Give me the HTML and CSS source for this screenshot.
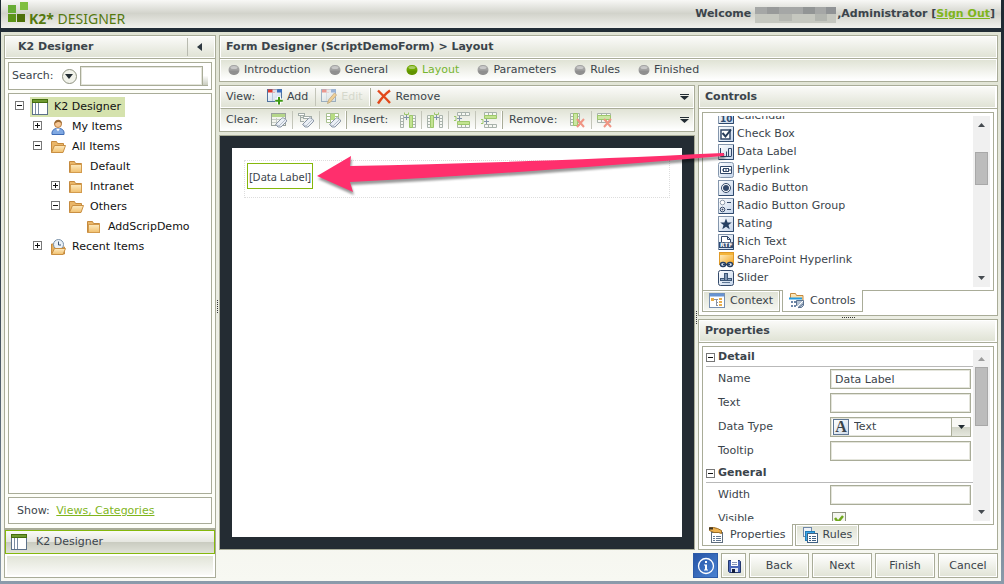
FILE: index.html
```html
<!DOCTYPE html>
<html lang="en">
<head>
    <meta charset="UTF-8">
    <meta name="viewport" content="width=device-width, initial-scale=1.0">
    <title>K2 Designer</title>
    <link rel="stylesheet" href="styles.css">
</head>
<body>
    <!-- shared icons -->
    <svg class="sprite" width="0" height="0">
        <defs>
            <linearGradient id="gFolder" x1="0" y1="0" x2="0" y2="1"><stop offset="0" stop-color="#fdeac0"/><stop offset="1" stop-color="#f0bf6c"/></linearGradient>
            <linearGradient id="gBlue" x1="0" y1="0" x2="1" y2="1"><stop offset="0" stop-color="#ffffff"/><stop offset="1" stop-color="#c3d4ea"/></linearGradient>
            <linearGradient id="gOrange" x1="0" y1="0" x2="1" y2="1"><stop offset="0" stop-color="#fff3cf"/><stop offset="1" stop-color="#f3a51c"/></linearGradient>
            <symbol id="designer" viewBox="0 0 16 16">
                <rect x=".5" y="3.5" width="15" height="12" fill="#fff" stroke="#5c7189"/>
                <path d="M3.5 4v11M6.5 4v11" stroke="#7b8da3" fill="none"/>
                <rect x=".5" y=".5" width="15" height="3" fill="#6e9a30" stroke="#456e0e"/>
            </symbol>
            <symbol id="folder" viewBox="0 0 16 16">
                <path d="M1.500 13.500v-11h5l1 2h6v9z" fill="#eab668" stroke="#c58a3e"/>
                <rect x="2.500" y="5.500" width="11" height="8" fill="url(#gFolder)" stroke="#d39b4d"/>
            </symbol>
            <symbol id="folder-open" viewBox="0 0 16 16">
                <path d="M1.500 13.500v-11h5l1 2h6v3" fill="#eab668" stroke="#c58a3e"/>
                <path d="M1.500 13.500l3-7h11l-2.500 7z" fill="url(#gFolder)" stroke="#c98f42"/>
            </symbol>
            <symbol id="user" viewBox="0 0 16 16">
                <path d="M2 15.500c-.5-4 2-5.500 4-6h4c2.500.5 4.500 2 4 6z" fill="#7fa8e2" stroke="#3f6cb5"/>
                <path d="M6 9.500l2 3 2-3z" fill="#fff"/>
                <circle cx="8" cy="5" r="3.500" fill="#f6c795" stroke="#b97d42"/>
                <path d="M4.500 5c-.5-5 7.500-6 7.500 0-1-2-4-3-7.500 0z" fill="#9a6a35"/>
            </symbol>
            <symbol id="recent" viewBox="0 0 16 16">
                <path d="M1.500 15v-10h4v3h9v7z" fill="#e5ae5c" stroke="#c58a3e"/>
                <circle cx="8.500" cy="5.500" r="5" fill="#eaf1f8" stroke="#7890a8"/>
                <path d="M8.500 2.500v3.500h2.500" stroke="#435a75" fill="none"/>
                <path d="M1.500 15.500l3-6h11l-2.500 6z" fill="url(#gFolder)" stroke="#c98f42"/>
            </symbol>
            <symbol id="view" viewBox="0 0 16 16">
                <rect x=".5" y=".5" width="14" height="12" fill="url(#gBlue)" stroke="#51749f"/>
                <path d="M1 2h7" stroke="#e23c32" stroke-width="3"/><path d="M5.500 2h5" stroke="#d9dce5" stroke-width="3"/><path d="M10 2h5" stroke="#3c6fbd" stroke-width="3"/>
                <path d="M5.500 4v8" stroke="#b9cade"/>
            </symbol>
            <symbol id="view-add" viewBox="0 0 16 16">
                <use href="#view"/><path d="M12 7.500v8M8 11.500h8" stroke="#fff" stroke-width="4"/><path d="M12 8v7.500M8.200 11.800h7.600" stroke="#3f9a16" stroke-width="2"/>
            </symbol>
            <symbol id="view-edit" viewBox="0 0 16 16">
                <use href="#view"/><path d="M6.500 14.500l1-3.500 6-7 2 2-6 7z" fill="#f4b347" stroke="#a9772e"/>
            </symbol>
            <symbol id="remove" viewBox="0 0 16 16">
                <path d="M2 1.500c3 3 8 8 12 12.500M14 1.500C9 5 5 10 2 14.500" stroke="#e2491b" stroke-width="2.400" fill="none"/>
            </symbol>
            <symbol id="eraser" viewBox="0 0 16 16">
                <path d="M4.500 12.500l6-6q1-1 2-.5l3 2q.500 1-.5 2l-5 5h-3z" fill="#eaeff5" stroke="#8793a3"/><path d="M5 12.500l3 1.500 6.500-6.500" stroke="#b3bdca" fill="none"/>
            </symbol>
            <symbol id="clear-view" viewBox="0 0 16 16">
                <rect x=".5" y="1.500" width="14" height="12" fill="#f3f5ef" stroke="#9aa29b"/><path d="M1 3.500h13" stroke="#b5d68a" stroke-width="3"/><path d="M1 7.500h13M1 10.500h13M5.500 6v8" stroke="#c6ccc5"/><use href="#eraser"/>
            </symbol>
            <symbol id="clear-control" viewBox="0 0 16 16">
                <rect x=".5" y="1.500" width="6" height="2" fill="#fff" stroke="#a2aca8"/><rect x="5.500" y="4.500" width="8" height="2" fill="#fff" stroke="#a2aca8"/><path d="M2.500 4v6M2 5.500h3M2 9.500h4" stroke="#a2aca8" fill="none"/><use href="#eraser"/>
            </symbol>
            <symbol id="clear-cell" viewBox="0 0 16 16">
                <path d="M1.500 1.500h12v9h-12zM5.500 1.500v9M9.500 1.500v9M1.500 4.500h12M1.500 7.500h12" fill="#fff" stroke="#a9c191"/><path d="M6 2h4v6h-4z" fill="#b7dd83"/><use href="#eraser"/>
            </symbol>
            <symbol id="col-left" viewBox="0 0 16 16">
                <path d="M.5 3.500h3v12h-3zM.5 6.500h3M.5 9.500h3M.5 12.500h3M12.500 3.500h3v12h-3zM12.500 6.500h3M12.500 9.500h3M12.500 12.500h3" fill="#f6f8f3" stroke="#a9b3ac"/>
                <path d="M9.500 3.500h3v12h-3z" fill="#c3e391" stroke="#9cc76a"/><path d="M4.500.5v2h4v-2" stroke="#9cc76a" fill="none"/><path d="M6.500 3v5M4 5.500h5" stroke="#8093a8"/>
            </symbol>
            <symbol id="row-up" viewBox="0 0 16 16">
                <path d="M3.500.5h12v3h-12zM7.500.5v3M11.500.5v3M3.500 12.500h12v3h-12zM7.500 12.500v3M11.500 12.500v3" fill="#f6f8f3" stroke="#a9b3ac"/>
                <path d="M3.500 9.500h12v3h-12z" fill="#c3e391" stroke="#9cc76a"/><path d="M0 4.500h2v4H0" stroke="#9cc76a" fill="none"/><path d="M5.500 4v5M3 6.500h5" stroke="#8093a8"/>
            </symbol>
            <symbol id="col-remove" viewBox="0 0 16 16">
                <path d="M.5 1.500h9v12h-9zM.5 4.500h9M.5 7.500h9M.5 10.500h9M3.500 1.500v12" fill="#f6f8f3" stroke="#a9b3ac"/><path d="M3.500 1.500h4v12h-4z" fill="#cbe6a2" stroke="#9cc76a"/><path d="M7 7l7 8M14 7l-7 8" stroke="#f09584" stroke-width="2"/>
            </symbol>
            <symbol id="row-remove" viewBox="0 0 16 16">
                <path d="M.5 1.500h13v9h-13zM4.500 1.500v9M9.500 1.500v9" fill="#f6f8f3" stroke="#a9b3ac"/><path d="M.5 3.500h13v4h-13z" fill="#cbe6a2" stroke="#9cc76a"/><path d="M7 7l7 8M14 7l-7 8" stroke="#f09584" stroke-width="2"/>
            </symbol>
            <symbol id="tile" viewBox="0 0 16 16">
                <rect x=".5" y=".5" width="15" height="15" fill="url(#gBlue)" stroke="#8496ad"/><path d="M15.500 1v14.500H1" stroke="#2f4a6e" fill="none"/>
            </symbol>
            <symbol id="c-calendar" viewBox="0 0 16 16"><use href="#tile"/><path d="M1 3h14" stroke="#2f4a6e" stroke-width="3"/><text x="2" y="14" class="tile-text">10</text></symbol>
            <symbol id="c-check" viewBox="0 0 16 16"><use href="#tile"/><rect x="3" y="4" width="9" height="9" fill="#fff" stroke="#33496a" stroke-width="1.500"/><path d="M4.500 7l3 3.500 5.500-7" stroke="#263c59" stroke-width="2" fill="none"/></symbol>
            <symbol id="c-label" viewBox="0 0 16 16"><use href="#tile"/><path d="M2.500 4v8.500h11M5.500 12v-3M8.500 12V7.500M10.500 12V4.500h3V12" stroke="#33496a" fill="none"/></symbol>
            <symbol id="c-link" viewBox="0 0 16 16"><rect x=".5" y=".5" width="15" height="15" rx="2" fill="url(#gBlue)" stroke="#8496ad"/><path d="M2.500 4.500h11v7h-11z" fill="#fff" stroke="#33496a"/><rect x="5.500" y="6.500" width="5" height="3" fill="#fff" stroke="#33496a"/><path d="M4 8h2M7 8h2M10 8h3" stroke="#33496a"/></symbol>
            <symbol id="c-radio" viewBox="0 0 16 16"><use href="#tile"/><circle cx="8" cy="8" r="4.500" fill="#fff" stroke="#33496a"/><circle cx="8" cy="8" r="3" fill="#33496a"/></symbol>
            <symbol id="c-group" viewBox="0 0 16 16"><use href="#tile"/><circle cx="4.500" cy="4.500" r="2.300" fill="#fff" stroke="#8d9aaa"/><circle cx="4.500" cy="11.500" r="2.300" fill="#fff" stroke="#33496a"/><circle cx="4.500" cy="11.500" r="1" fill="#33496a"/><path d="M9 4.500h4M9 11.500h4" stroke="#33496a"/></symbol>
            <symbol id="c-rating" viewBox="0 0 16 16"><use href="#tile"/><path d="M8 2.500l1.600 4h4.200l-3.300 2.600 1.200 4.200L8 10.800l-3.700 2.500 1.200-4.200-3.300-2.600h4.200z" fill="#263f61"/></symbol>
            <symbol id="c-rich" viewBox="0 0 16 16"><use href="#tile"/><path d="M3.500 8V2.500h6l3 3V8M9.500 2.500v3h3" fill="#fff" stroke="#33496a"/><rect x="1" y="8" width="14" height="6" fill="#2f4a6e"/><text x="2" y="13" class="rtf-text">RTF</text></symbol>
            <symbol id="c-share" viewBox="0 0 16 16"><rect x="1.500" y=".5" width="14" height="12" fill="url(#gOrange)" stroke="#e09a28"/><path d="M2 2h13" stroke="#f4b53a" stroke-width="2"/><rect x="2.500" y="10.500" width="5" height="4" rx="2" fill="#dbe4f0" stroke="#263f61" stroke-width="1.500"/><rect x="9.500" y="10.500" width="5" height="4" rx="2" fill="#dbe4f0" stroke="#263f61" stroke-width="1.500"/><path d="M5 12.500h7" stroke="#263f61" stroke-width="1.500"/></symbol>
            <symbol id="c-slider" viewBox="0 0 16 16"><rect x=".5" y=".5" width="15" height="15" rx="2" fill="url(#gBlue)" stroke="#33496a"/><rect x="2" y="8" width="12" height="3" fill="#3c5676"/><rect x="3" y="9" width="10" height="1" fill="#8ea2bd"/><rect x="6" y="3" width="4" height="8" fill="#3c5676"/><rect x="7" y="4" width="2" height="6" fill="#7e94b2"/><path d="M4 12.500h8" stroke="#5d7593"/></symbol>
            <symbol id="t-context" viewBox="0 0 16 16"><rect x=".5" y=".5" width="15" height="14" fill="#fff" stroke="#7890b0"/><path d="M1 2h14" stroke="#6693d2" stroke-width="3"/><path d="M5 6.500h4M7.500 6v6M7 9.500h2M7 12.500h2" stroke="#8a91a0" fill="none"/><path d="M2 5h3v3h-3zM10 5h3v2h-3zM10 8h3v2h-3zM10 11h3v2h-3z" fill="#e8ad4b"/></symbol>
            <symbol id="t-controls" viewBox="0 0 16 16"><path d="M1.500 14V.5h5l1 2h6.500v5" fill="url(#gFolder)" stroke="#c58a3e"/><rect x="1" y="6" width="12" height="9" fill="#fff"/><path d="M0 5.500h13" stroke="#249be0" stroke-width="2"/><path d="M2 8h2v2h-2zM2 12h2v2h-2zM5 8h2v2h-2zM5 12h2v2h-2z" fill="#6e87a8"/><path d="M7.500 7.500h7v5l-2 2h-3l-2-2z" fill="#b4c2d3" stroke="#5c728f"/><path d="M8 14l6-6" stroke="#fff"/><path d="M9 15l5-4" stroke="#5c728f"/></symbol>
            <symbol id="t-properties" viewBox="0 0 16 16"><rect x="2.500" y="5.500" width="11" height="10" fill="#fff" stroke="#5f6e7d"/><path d="M7 9.500h5M7 11.500h5M7 13.500h5M4 9.500h2M4 11.500h2M4 13.500h2" stroke="#627791"/><path d="M.5.5h4l4 1 4 2v3l-3-1H5l-4.500-2z" fill="#edb04e" stroke="#9a6b22"/><path d="M0 1.500h4" stroke="#3c3527" stroke-width="2"/></symbol>
            <symbol id="t-rules" viewBox="0 0 16 16"><rect x="1.500" y=".5" width="8" height="9" fill="#eef3f9" stroke="#6e87a8"/><rect x="3.500" y="4.500" width="9" height="9" fill="#3aa6e6" stroke="#207cb8"/><rect x="5.500" y="6.500" width="10" height="9" fill="#fff" stroke="#3f6183"/><path d="M7 9.500h2M10 9.500h4M7 11.500h2M10 11.500h4M7 13.500h2M10 13.500h4" stroke="#3f6183"/></symbol>
            <symbol id="ball" viewBox="0 0 12 12"><rect x=".5" y="1" width="11" height="10" rx="5" fill="currentColor"/><path d="M1 6.500h10a5 4.500 0 0 1-10 0z" fill="#000" opacity=".12"/><ellipse cx="6" cy="3.500" rx="3.500" ry="1.500" fill="#fff" opacity=".4"/></symbol>
        </defs>
    </svg>

    <div class="app">
        <header class="banner">
            <div class="logo">
                <svg width="20" height="20" viewBox="0 0 20 20">
                    <rect y="3" width="8" height="8" fill="#68ac35"/><rect x="12" width="8" height="8" fill="#7fbf3f"/>
                    <rect y="12" width="8" height="8" fill="#5c9418"/><rect x="9" y="12" width="8" height="8" fill="#4d7009"/>
                </svg>
                <span><b>K2*</b> DESIGNER</span>
            </div>
            <div class="welcome">
                <span>Welcome</span>
                <svg class="masked" width="81" height="16" viewBox="0 0 81 16">
                    <rect width="81" height="16" fill="#c5c7bf"/><rect width="81" height="7" fill="#a5a7a6"/><rect x="12" width="12" height="7" fill="#989a9a"/><rect x="48" width="12" height="7" fill="#929595"/><rect x="71" width="10" height="7" fill="#909395"/>
                    <rect x="24" y="7" width="13" height="7" fill="#b5b7b1"/><rect x="60" y="7" width="12" height="7" fill="#b2b5af"/>
                </svg>
                <span>,Administrator [<a href="#">Sign Out</a>]</span>
            </div>
        </header>

        <div class="frame">
            <aside class="panel sidebar">
                <div class="panel-header side-header">
                    <h2>K2 Designer</h2>
                    <button class="collapse" aria-label="Collapse"><svg width="5" height="8"><path d="M5 0v8L0 4z" fill="#2d3840"/></svg></button>
                </div>
                <div class="side-body">
                    <form class="box search">
                        <label for="search">Search:</label>
                        <button type="button" class="round" aria-label="Search options"><svg width="8" height="5"><path d="M0 0h8L4 5z" fill="#222c33"/></svg></button>
                        <input type="text" id="search">
                        <span class="search-go"></span>
                    </form>
                    <div class="box tree">
                        <ul>
                            <li>
                                <div class="node"><button class="toggle minus" aria-label="Collapse"></button><span class="item selected"><svg><use href="#designer"/></svg>K2 Designer</span></div>
                                <ul>
                                    <li><div class="node"><button class="toggle plus" aria-label="Expand"></button><span class="item"><svg><use href="#user"/></svg>My Items</span></div></li>
                                    <li>
                                        <div class="node"><button class="toggle minus" aria-label="Collapse"></button><span class="item"><svg><use href="#folder-open"/></svg>All Items</span></div>
                                        <ul>
                                            <li><div class="node"><span class="toggle-gap"></span><span class="item"><svg><use href="#folder"/></svg>Default</span></div></li>
                                            <li><div class="node"><button class="toggle plus" aria-label="Expand"></button><span class="item"><svg><use href="#folder"/></svg>Intranet</span></div></li>
                                            <li>
                                                <div class="node"><button class="toggle minus" aria-label="Collapse"></button><span class="item"><svg><use href="#folder-open"/></svg>Others</span></div>
                                                <ul>
                                                    <li><div class="node"><span class="toggle-gap"></span><span class="item"><svg><use href="#folder"/></svg>AddScripDemo</span></div></li>
                                                </ul>
                                            </li>
                                        </ul>
                                    </li>
                                    <li><div class="node"><button class="toggle plus" aria-label="Expand"></button><span class="item"><svg><use href="#recent"/></svg>Recent Items</span></div></li>
                                </ul>
                            </li>
                        </ul>
                    </div>
                    <div class="box show">Show: <a href="#">Views, Categories</a></div>
                </div>
                <button class="side-tab"><svg><use href="#designer"/></svg>K2 Designer</button>
                <div class="side-footer"></div>
            </aside>

            <div class="splitter vertical"></div>

            <main class="main">
                <section class="panel wizard">
                    <div class="panel-header"><h1>Form Designer (ScriptDemoForm) &gt; Layout</h1></div>
                    <ol class="steps">
                        <li><svg><use href="#ball"/></svg>Introduction</li>
                        <li><svg><use href="#ball"/></svg>General</li>
                        <li class="current"><svg><use href="#ball"/></svg>Layout</li>
                        <li><svg><use href="#ball"/></svg>Parameters</li>
                        <li><svg><use href="#ball"/></svg>Rules</li>
                        <li><svg><use href="#ball"/></svg>Finished</li>
                    </ol>
                </section>

                <div class="workspace">
                    <section class="center">
                        <div class="panel toolbars">
                            <div class="toolbar upper">
                                <span class="tool-label">View:</span>
                                <button><svg><use href="#view-add"/></svg>Add</button>
                                <button disabled><svg><use href="#view-edit"/></svg>Edit</button>
                                <button class="group-start"><svg><use href="#remove"/></svg>Remove</button>
                                <button class="more" aria-label="More"><svg viewBox="0 0 9 6"><path d="M0 0h9v1H0zM0 2h9L4.500 6z" fill="#222c33"/></svg></button>
                            </div>
                            <div class="toolbar lower">
                                <span class="tool-label">Clear:</span>
                                <button aria-label="Clear view"><svg><use href="#clear-view"/></svg></button>
                                <button aria-label="Clear control"><svg><use href="#clear-control"/></svg></button>
                                <button aria-label="Clear cell"><svg><use href="#clear-cell"/></svg></button>
                                <span class="tool-label group-start">Insert:</span>
                                <button aria-label="Insert column left"><svg><use href="#col-left"/></svg></button>
                                <button aria-label="Insert column right"><svg class="flip-x"><use href="#col-left"/></svg></button>
                                <button aria-label="Insert row above"><svg><use href="#row-up"/></svg></button>
                                <button aria-label="Insert row below"><svg class="flip-y"><use href="#row-up"/></svg></button>
                                <span class="tool-label group-start">Remove:</span>
                                <button aria-label="Remove column"><svg><use href="#col-remove"/></svg></button>
                                <button aria-label="Remove row"><svg><use href="#row-remove"/></svg></button>
                                <button class="more" aria-label="More"><svg viewBox="0 0 9 6"><path d="M0 0h9v1H0zM0 2h9L4.500 6z" fill="#222c33"/></svg></button>
                            </div>
                        </div>
                        <div class="canvas">
                            <div class="sheet">
                                <div class="cell"><span class="data-label">[Data Label]</span></div>
                            </div>
                        </div>
                    </section>

                    <div class="splitter vertical"></div>

                    <section class="right">
                        <div class="panel tool-panel">
                            <div class="panel-header notch"><h2>Controls</h2></div>
                            <div class="tool-body">
                                <div class="box list-box">
                                    <ul class="controls">
                                        <li><svg><use href="#c-calendar"/></svg>Calendar</li>
                                        <li><svg><use href="#c-check"/></svg>Check Box</li>
                                        <li><svg><use href="#c-label"/></svg>Data Label</li>
                                        <li><svg><use href="#c-link"/></svg>Hyperlink</li>
                                        <li><svg><use href="#c-radio"/></svg>Radio Button</li>
                                        <li><svg><use href="#c-group"/></svg>Radio Button Group</li>
                                        <li><svg><use href="#c-rating"/></svg>Rating</li>
                                        <li><svg><use href="#c-rich"/></svg>Rich Text</li>
                                        <li><svg><use href="#c-share"/></svg>SharePoint Hyperlink</li>
                                        <li><svg><use href="#c-slider"/></svg>Slider</li>
                                    </ul>
                                    <div class="scrollbar middle">
                                        <svg width="7" height="4"><path d="M0 4h7L3.500 0z" fill="#454b50"/></svg>
                                        <div class="track"><div class="thumb"></div></div>
                                        <svg width="7" height="4"><path d="M0 0h7L3.500 4z" fill="#454b50"/></svg>
                                    </div>
                                </div>
                                <div class="tabs">
                                    <button class="tab"><svg><use href="#t-context"/></svg>Context</button>
                                    <button class="tab active"><svg><use href="#t-controls"/></svg>Controls</button>
                                </div>
                            </div>
                        </div>

                        <div class="splitter horizontal"></div>

                        <div class="panel tool-panel">
                            <div class="panel-header notch"><h2>Properties</h2></div>
                            <div class="tool-body">
                                <div class="box list-box">
                                    <form class="properties">
                                        <h3><button type="button" class="toggle minus" aria-label="Collapse"></button>Detail</h3>
                                        <div class="field"><label for="name">Name</label><input type="text" id="name" value="Data Label"></div>
                                        <div class="field"><label for="text">Text</label><input type="text" id="text"></div>
                                        <div class="field">
                                            <label for="type">Data Type</label>
                                            <div class="select-wrap">
                                                <select id="type"><option>Text</option></select>
                                                <span class="type-icon">A</span>
                                                <span class="select-arrow"><svg width="7" height="4"><path d="M0 0h7L3.500 4z" fill="#222c33"/></svg></span>
                                            </div>
                                        </div>
                                        <div class="field"><label for="tooltip">Tooltip</label><input type="text" id="tooltip"></div>
                                        <h3><button type="button" class="toggle minus" aria-label="Collapse"></button>General</h3>
                                        <div class="field"><label for="width">Width</label><input type="text" id="width"></div>
                                        <div class="field">
                                            <label for="visible">Visible</label>
                                            <span class="check-wrap"><input type="checkbox" id="visible" checked><svg viewBox="0 0 10 10"><path d="M1 4l3 4 5-6" fill="none" stroke="#6fa81d" stroke-width="2.500"/></svg></span>
                                        </div>
                                    </form>
                                    <div class="scrollbar top">
                                        <svg width="7" height="4"><path d="M0 4h7L3.500 0z" fill="#9c9c9c"/></svg>
                                        <div class="track"><div class="thumb"></div></div>
                                        <svg width="7" height="4"><path d="M0 0h7L3.500 4z" fill="#454b50"/></svg>
                                    </div>
                                </div>
                                <div class="tabs">
                                    <button class="tab active"><svg><use href="#t-properties"/></svg>Properties</button>
                                    <button class="tab"><svg><use href="#t-rules"/></svg>Rules</button>
                                </div>
                            </div>
                        </div>
                    </section>

                    <!-- drag arrow from the control list to the sheet -->
                    <svg class="arrow" width="420" height="50" viewBox="0 0 420 50">
                        <path d="M4 26L38 6l-1 10Q200 13 410 3q3 2 0 3Q200 24 37 32l3 10z" fill="#ff2f6d"/>
                    </svg>
                </div>

                <footer class="actions">
                    <button class="square info" aria-label="Information"><svg viewBox="0 0 18 18"><circle cx="9" cy="9" r="7.500" fill="none" stroke="#fff" stroke-width="1.300"/><path d="M8 4h2v2H8zM7 7.500h3v5h1v1H7v-1h1v-4H7z" fill="#fff"/></svg></button>
                    <button class="square" aria-label="Save"><svg viewBox="0 0 18 18"><path d="M3.500 3.500h11l1 1v11h-11l-1-1z" fill="#4a67b8" stroke="#24386f"/><path d="M6 3h7v6H6z" fill="#fff"/><path d="M7 5.500h5M7 7.500h5" stroke="#8a97b8"/><path d="M6 11h7v4H6z" fill="#dfe5f2"/><path d="M7 12h3v4H7z" fill="#111c3d"/></svg></button>
                    <button>Back</button>
                    <button>Next</button>
                    <button>Finish</button>
                    <button>Cancel</button>
                </footer>
            </main>
        </div>
    </div>
</body>
</html>
```

FILE: styles.css
```css
* {
    box-sizing: border-box;
}
body {
    margin: 0;
    height: 100vh;
    padding: 0 3px 3px 1px;
    background: linear-gradient(#1e2a33 0%, #26323c 35%, #5f6e7c 75%, #8b9bab 100%);
    font-family: Verdana, "DejaVu Sans", sans-serif;
    font-size: 11px;
    line-height: 14px;
    color: #3b444b;
}
ul, ol {
    list-style: none;
    margin: 0;
    padding: 0;
}
h1, h2, h3 {
    margin: 0;
    font-size: 11px;
    font-weight: bold;
}
button, input, select {
    font: inherit;
    color: inherit;
    margin: 0;
}
button {
    padding: 0;
    border: 0;
    background: none;
    cursor: pointer;
}
svg {
    display: block;
    flex: none;
}
a {
    color: #7fb51c;
}
.sprite {
    position: absolute;
}
.tile-text {
    font: bold 9px "DejaVu Sans", sans-serif;
    fill: #2f4a6e;
}
.rtf-text {
    font: bold 6px "DejaVu Sans", sans-serif;
    fill: #fff;
}
.app {
    display: flex;
    flex-direction: column;
    height: 100%;
}

/* banner */
.banner {
    display: flex;
    justify-content: space-between;
    height: 32px;
    border-bottom: 4px solid #222d36;
    background: linear-gradient(#f8f8f6 0%, #d2d3cb 48%, #f1f1ec 100%);
}
.logo {
    display: flex;
    gap: 1px;
    padding: 2px 0 0 7px;
    font-family: "Noto Sans", "Open Sans", sans-serif;
    font-size: 14px;
    line-height: 33px;
    color: #55790f;
}
.logo span {
    height: 24px;
}
.welcome {
    display: flex;
    padding: 7px 6px 0 0;
    font-weight: bold;
}
.masked {
    margin: 0 1px 0 4px;
}

/* frame and panels */
.frame {
    flex: 1;
    display: flex;
    min-height: 0;
    padding: 3px;
    background: linear-gradient(#e0e3d4, #f7f8f2);
}
.panel {
    border: 1px solid #a9ac98;
    background: #fff;
}
.panel-header {
    display: flex;
    align-items: center;
    height: 22px;
    padding-left: 5px;
    border: 1px solid #fff;
    background: linear-gradient(#fafaf8, #e0e3d5);
    box-shadow: 0 1px #a9ac98;
}
.notch {
    border-right-width: 2px;
}
.box {
    border: 1px solid #a9ac98;
    background: #fff;
}
.splitter {
    flex: none;
    display: flex;
    align-items: center;
    justify-content: center;
}
.splitter.vertical {
    width: 3px;
}
.splitter.horizontal {
    height: 3px;
}
.splitter.vertical::before {
    content: "";
    height: 13px;
    border-left: 1px dotted #333;
}
.splitter.horizontal::before {
    content: "";
    width: 13px;
    border-top: 1px dotted #333;
}

/* sidebar */
.sidebar {
    flex: none;
    display: flex;
    flex-direction: column;
    width: 212px;
}
.side-header {
    justify-content: space-between;
    padding-left: 12px;
}
.collapse {
    display: flex;
    align-items: center;
    width: 27px;
    height: 18px;
    padding-left: 9px;
    border-left: 1px solid #b9bbb0;
}
.side-body {
    flex: 1;
    display: flex;
    flex-direction: column;
    gap: 3px;
    min-height: 0;
    padding: 3px 3px 4px;
    margin-top: 1px;
    background: #fdfef8;
}
.search {
    display: flex;
    align-items: center;
    height: 28px;
    padding: 0 3px;
}
.round {
    display: flex;
    align-items: center;
    justify-content: center;
    flex: none;
    width: 15px;
    height: 15px;
    margin: 0 3px 0 8px;
    border: 1px solid #8f9382;
    border-radius: 50%;
    background: #f1f2ea;
}
input[type="text"] {
    height: 20px;
    padding: 0 4px;
    border: 1px solid #a9ac98;
    box-shadow: inset 0 0 0 1px #e4e5dc;
    background: #fff;
    outline: none;
}
.search input {
    flex: 1;
    min-width: 0;
}
.search-go {
    width: 5px;
    height: 20px;
    background: linear-gradient(#fff 50%, #c9ccbf);
    border-bottom: 1px solid #a9ac98;
}
.tree {
    flex: 1;
    min-height: 0;
    padding: 3px 6px;
    color: #111;
}
.tree ul ul {
    padding-left: 18px;
}
.node {
    display: flex;
    align-items: center;
    gap: 6px;
    height: 20px;
}
.toggle {
    flex: none;
    width: 9px;
    height: 9px;
    border: 1px solid #777;
    background: linear-gradient(#111, #111) center / 5px 1px no-repeat, #fff;
}
.toggle.plus {
    background: linear-gradient(#111, #111) center / 5px 1px no-repeat, linear-gradient(#111, #111) center / 1px 5px no-repeat, #fff;
}
.node .toggle {
    margin-bottom: 3px;
}
.toggle-gap {
    flex: none;
    width: 9px;
}
.item {
    display: flex;
    align-items: center;
    gap: 6px;
    height: 20px;
    padding: 0 4px 0 2px;
    white-space: nowrap;
}
.selected {
    background: #d5e2ad;
}
.item svg, .side-tab svg, .toolbar svg, .controls svg, .tab svg {
    width: 16px;
    height: 16px;
}
.show {
    height: 27px;
    padding: 6px 8px;
}
.show a {
    margin-left: 3px;
}
.side-tab {
    display: flex;
    align-items: center;
    gap: 9px;
    height: 24px;
    padding-left: 5px;
    margin-top: 2px;
    border: 1px solid #85b80c;
    box-shadow: 0 -2px #a9ac98;
    background: linear-gradient(#fafaf7 0%, #e5e6e0 50%, #c9cbc0 50%, #dfe1d7 100%);
}
.side-footer {
    height: 23px;
    border: 1px solid #fff;
    box-shadow: inset 0 0 0 1px #fff;
    background: linear-gradient(#e0e3d6, #fbfbf9);
}

/* wizard */
.main {
    flex: 1;
    display: flex;
    flex-direction: column;
    min-width: 0;
}
.steps {
    display: flex;
    align-items: center;
    gap: 18px;
    height: 22px;
    padding-left: 7px;
    margin-top: 1px;
    border: 1px solid #fff;
    background: linear-gradient(#e0e3d5, #fff);
}
.steps li {
    display: flex;
    align-items: center;
    gap: 4px;
}
.steps svg {
    width: 12px;
    height: 12px;
    color: #a3a3a3;
}
.steps .current {
    color: #76b52f;
}
.steps .current svg {
    color: #6fa800;
}
.workspace {
    position: relative;
    flex: 1;
    display: flex;
    min-height: 0;
    margin: 3px 0;
}
.center {
    flex: 1;
    display: flex;
    flex-direction: column;
    gap: 3px;
    min-width: 0;
}

/* toolbars */
.toolbar {
    display: flex;
    align-items: center;
    height: 22px;
    padding-left: 5px;
    border: 1px solid #fff;
    background: linear-gradient(#fafaf8, #e0e3d5);
}
.toolbar.lower {
    height: 23px;
    border-top-color: #a9ac98;
    background: linear-gradient(#e0e3d5, #fff);
}
.toolbar button {
    display: flex;
    align-items: center;
    gap: 4px;
    height: 18px;
    padding: 0 5px;
    border-left: 1px solid #c3c5b9;
}
.toolbar.upper button {
    padding-right: 7px;
}
.toolbar .tool-label + button {
    border-left-color: transparent;
}
.tool-label {
    width: 39px;
    height: 18px;
    line-height: 18px;
}
.upper .tool-label {
    width: 35px;
}
.toolbar .group-start {
    border-left: 1px solid #a9ac98;
    box-shadow: -1px 0 #fff;
}
.tool-label.group-start {
    width: 48px;
    padding-left: 6px;
}
.tool-label.group-start ~ .tool-label.group-start {
    width: 62px;
}
.toolbar button:disabled {
    color: #d5d8cc;
}
.toolbar button:disabled svg {
    opacity: .5;
}
.toolbar .more, .toolbar.upper .more {
    margin-left: auto;
    padding: 0 4px;
    border: 0;
}
.toolbar .more svg {
    width: 9px;
    height: 6px;
}
.flip-x {
    transform: scaleX(-1);
}
.flip-y {
    transform: scaleY(-1);
}

/* design canvas */
.canvas {
    flex: 1;
    display: flex;
    padding: 12px;
    border: 1px solid #a9ac98;
    background: #242c33;
}
.sheet {
    flex: 1;
    padding: 12px;
    background: #fff;
}
.cell {
    height: 38px;
    padding: 2px;
    border: 1px dotted #ddd;
}
.data-label {
    display: inline-block;
    height: 26px;
    padding: 0 1px;
    border: 1px solid #85b80c;
    font-family: "Noto Sans", "Open Sans", sans-serif;
    font-size: 11px;
    line-height: 25px;
}
.arrow {
    position: absolute;
    top: 65px;
    left: 94px;
    filter: drop-shadow(1px 3px 1px rgba(0, 0, 0, .4));
    pointer-events: none;
}

/* right column */
.right {
    flex: none;
    display: flex;
    flex-direction: column;
    width: 300px;
}
.tool-panel {
    flex: 1;
    display: flex;
    flex-direction: column;
    min-height: 0;
}
.tool-body {
    flex: 1;
    display: flex;
    flex-direction: column;
    min-height: 0;
    margin-top: 1px;
    padding: 3px;
}
.list-box {
    flex: 1;
    display: flex;
    min-height: 0;
    padding: 3px;
    overflow: hidden;
}
.controls, .properties {
    flex: 1;
    overflow: hidden;
}
.controls {
    display: flex;
    flex-direction: column;
    justify-content: flex-end;
    padding-left: 12px;
}
.controls li {
    flex: none;
    display: flex;
    align-items: center;
    gap: 3px;
    height: 18px;
}
.scrollbar {
    flex: none;
    display: flex;
    flex-direction: column;
    align-items: center;
    width: 17px;
    padding: 7px 0;
    background: #f0f0f0;
}
.track {
    flex: 1;
    display: flex;
    flex-direction: column;
    margin: 6px 0;
}
.thumb {
    width: 13px;
    height: 33px;
    border: 1px solid #a8a8a8;
    background: #bcbcbc;
}
.middle .thumb {
    margin-top: 19px;
}
.top .thumb {
    height: 59px;
}
.tabs {
    display: flex;
    gap: 2px;
}
.tab {
    display: flex;
    align-items: center;
    gap: 5px;
    height: 21px;
    padding: 0 6px;
    border: 1px solid #a9ac98;
    border-top: 0;
    background: linear-gradient(#dfe2d4, #f6f7f2);
    box-shadow: inset 0 0 0 1px #fff;
}
.tab.active {
    position: relative;
    height: 22px;
    margin-top: -1px;
    padding-top: 1px;
    background: #fff;
}

/* property grid */
.properties h3 {
    display: flex;
    align-items: center;
    gap: 3px;
    height: 17px;
    padding-bottom: 2px;
    border-bottom: 1px solid #b9b9b9;
}
.field + h3 {
    margin-top: 3px;
}
.field {
    display: flex;
    align-items: center;
    height: 24px;
    padding: 0 2px 0 12px;
}
.field label {
    flex: none;
    width: 112px;
}
.field input[type="text"], .select-wrap {
    flex: 1;
    min-width: 0;
}
.select-wrap {
    position: relative;
    height: 20px;
}
select {
    appearance: none;
    width: 100%;
    height: 20px;
    padding: 0 20px 0 23px;
    border: 1px solid #a9ac98;
    border-radius: 0;
    background: #fff;
    box-shadow: inset 0 0 0 1px #e4e5dc;
}
.type-icon {
    position: absolute;
    top: 2px;
    left: 3px;
    width: 16px;
    height: 16px;
    border: 1px solid #5e7694;
    background: linear-gradient(135deg, #fff, #cfdbea);
    font: bold 16px/14px "Liberation Serif", serif;
    text-align: center;
    pointer-events: none;
}
.select-arrow {
    position: absolute;
    top: 1px;
    right: 1px;
    display: flex;
    align-items: center;
    justify-content: center;
    width: 19px;
    height: 18px;
    border-left: 1px solid #a9ac98;
    background: linear-gradient(#f8f8f5 50%, #d0d3c6 50%, #e5e7de);
    pointer-events: none;
}
.check-wrap {
    position: relative;
    margin-left: 2px;
}
.check-wrap input {
    display: block;
    appearance: none;
    width: 14px;
    height: 14px;
    border: 1px solid #8f9382;
    background: #f4f5f0;
}
.check-wrap svg {
    position: absolute;
    top: 2px;
    left: 2px;
    width: 10px;
    height: 10px;
    pointer-events: none;
}

/* footer buttons */
.actions {
    display: flex;
    justify-content: flex-end;
    gap: 3px;
}
.actions button {
    width: 60px;
    height: 25px;
    border: 1px solid #a9ac98;
    background: linear-gradient(#fff, #e0e3d5);
    box-shadow: inset 0 0 0 1px #fff;
}
.actions .square {
    display: flex;
    align-items: center;
    justify-content: center;
    width: 25px;
}
.square svg {
    width: 18px;
    height: 18px;
}
.actions .info {
    border-color: #2c5ba8;
    background: linear-gradient(135deg, #2553a5, #4a83d2);
    box-shadow: none;
}
```
